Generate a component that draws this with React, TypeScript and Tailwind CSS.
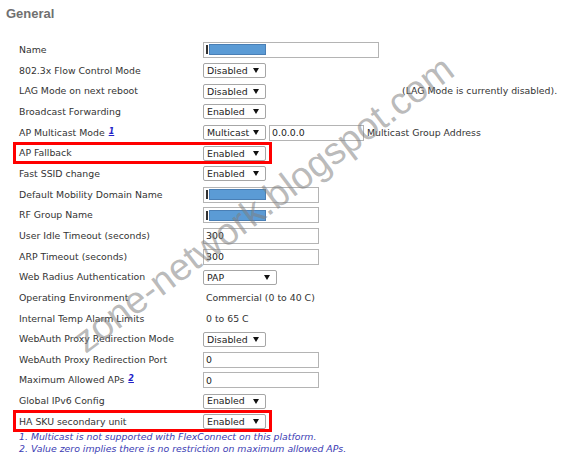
import React from 'react';

type Row = {
  label: string;
  note?: number;
  highlight?: boolean;
  control: React.ReactNode;
};

function Select({ value, width = 63 }: { value: string; width?: number }) {
  return (
    <div
      className="relative h-[15px] border border-[#a6a6a6] rounded-[2px] bg-white flex items-center pl-[3px] text-[#222]"
      style={{ width }}
    >
      <span className="leading-none">{value}</span>
      <svg className="absolute right-[6px] top-[4px]" width="6" height="5" viewBox="0 0 6 5">
        <polygon points="0,0 6,0 3,5" fill="#111" />
      </svg>
    </div>
  );
}

function Input({ value = '', width = 116, redacted = false }: { value?: string; width?: number; redacted?: boolean }) {
  return (
    <div
      className="relative h-[16px] border border-[#b4b4b4] bg-white flex items-center pl-[2px] text-[#222]"
      style={{ width }}
    >
      {redacted ? (
        <>
          <span className="w-[2px] h-[9px] bg-[#333] mr-[1px]" />
          <span className="w-[57px] h-[11px] bg-[#5b9bd5] border border-[#4a7fb5]" />
        </>
      ) : (
        <span className="leading-none">{value}</span>
      )}
    </div>
  );
}

function Note({ n }: { n: number }) {
  return (
    <sup className="ml-[4px] text-[8px] font-bold italic text-[#2323c8] underline relative top-[-1px]">{n}</sup>
  );
}

const rows: Row[] = [
  { label: 'Name', control: <Input width={176} redacted /> },
  { label: '802.3x Flow Control Mode', control: <Select value="Disabled" /> },
  {
    label: 'LAG Mode on next reboot',
    control: (
      <div className="flex items-center">
        <Select value="Disabled" />
        <span className="ml-[136px] text-[#333]">(LAG Mode is currently disabled).</span>
      </div>
    ),
  },
  { label: 'Broadcast Forwarding', control: <Select value="Enabled" /> },
  {
    label: 'AP Multicast Mode',
    note: 1,
    control: (
      <div className="flex items-center">
        <Select value="Multicast" />
        <div className="ml-[3px]">
          <Input value="0.0.0.0" width={95} />
        </div>
        <span className="ml-[3px] text-[#333]">Multicast Group Address</span>
      </div>
    ),
  },
  { label: 'AP Fallback', highlight: true, control: <Select value="Enabled" /> },
  { label: 'Fast SSID change', control: <Select value="Enabled" /> },
  { label: 'Default Mobility Domain Name', control: <Input redacted /> },
  { label: 'RF Group Name', control: <Input redacted /> },
  { label: 'User Idle Timeout (seconds)', control: <Input value="300" /> },
  { label: 'ARP Timeout (seconds)', control: <Input value="300" /> },
  { label: 'Web Radius Authentication', control: <Select value="PAP" width={74} /> },
  { label: 'Operating Environment', control: <span className="pl-[3px] text-[#333]">Commercial (0 to 40 C)</span> },
  { label: 'Internal Temp Alarm Limits', control: <span className="pl-[3px] text-[#333]">0 to 65 C</span> },
  { label: 'WebAuth Proxy Redirection Mode', control: <Select value="Disabled" /> },
  { label: 'WebAuth Proxy Redirection Port', control: <Input value="0" /> },
  { label: 'Maximum Allowed APs', note: 2, control: <Input value="0" /> },
  { label: 'Global IPv6 Config', control: <Select value="Enabled" /> },
  { label: 'HA SKU secondary unit', highlight: true, control: <Select value="Enabled" /> },
];

export default function App() {
  return (
    <div className="relative w-[565px] h-[457px] bg-white overflow-hidden font-['DejaVu_Sans',Verdana,sans-serif] text-[9.35px]">
      {/* Header */}
      <div className="pl-[6px] pt-[6px] h-[22px] leading-[16px] text-[13px] font-bold text-[#707070] font-['Liberation_Sans',Arial,sans-serif]">
        General
      </div>

      {/* Settings table */}
      <div className="mt-[17.67px]">
        {rows.map((r) => (
          <div key={r.label} className="relative h-[20.67px] flex items-center pl-[19px]">
            <div className="w-[184px] text-[#333] flex items-center">
              <span>{r.label}</span>
              {r.note && <Note n={r.note} />}
            </div>
            {r.control}
            {r.highlight && (
              <div className="absolute left-[13px] top-[-1px] w-[259px] h-[22px] border-[3px] border-[#ff0000] pointer-events-none" />
            )}
          </div>
        ))}
      </div>

      {/* Footnotes */}
      <div className="pl-[19px] mt-[-1px] italic text-[#3b3bb3] text-[9.35px] leading-[12px]">
        <p>1. Multicast is not supported with FlexConnect on this platform.</p>
        <p>2. Value zero implies there is no restriction on maximum allowed APs.</p>
      </div>

      {/* Watermark */}
      <span className="absolute left-[86px] top-[322px] whitespace-nowrap leading-none text-[38px] text-[#808080]/55 font-['Liberation_Sans',Arial,sans-serif] origin-[0_33px] rotate-[-37deg] pointer-events-none">
        zone-network.blogspot.com
      </span>
    </div>
  );
}
